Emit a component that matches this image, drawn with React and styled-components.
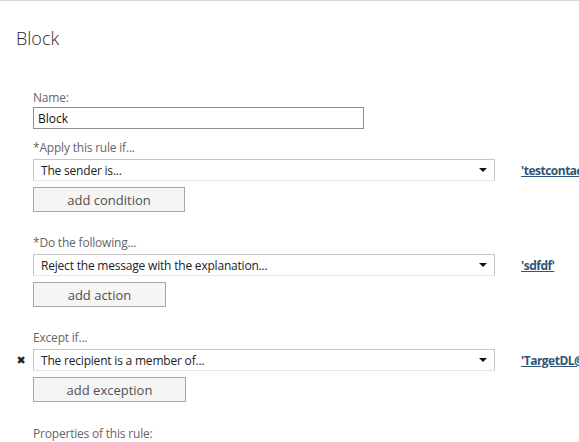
import React from 'react';
import styled, { createGlobalStyle } from 'styled-components';

const GlobalStyle = createGlobalStyle`
  html, body {
    margin: 0;
    padding: 0;
    background: #ffffff;
    overflow: hidden;
  }

  body {
    font-family: 'Open Sans', 'Noto Sans', 'Liberation Sans', sans-serif;
    color: #333333;
  }
`;

const SECTIONS = [
  {
    label: '*Apply this rule if...',
    value: 'The sender is...',
    link: "'testcontact@contoso.com'",
    button: 'add condition',
    buttonWidth: 152,
  },
  {
    label: '*Do the following...',
    value: 'Reject the message with the explanation...',
    link: "'sdfdf'",
    button: 'add action',
    buttonWidth: 133,
  },
  {
    label: 'Except if...',
    value: 'The recipient is a member of...',
    link: "'TargetDL@contoso.com'",
    button: 'add exception',
    buttonWidth: 153,
    removable: true,
  },
];

function App() {
  return (
    <>
      <GlobalStyle />
      <Page>
        <Title>Block</Title>
        <Form>
          <NameField>
            <Label>Name:</Label>
            <TextInput defaultValue="Block" />
          </NameField>
          {SECTIONS.map(section => (
            <Section key={section.label}>
              <Gutter />
              <Label>{section.label}</Label>
              <Spacer />
              <Gutter>{section.removable && <Remove>✖</Remove>}</Gutter>
              <Select>
                <SelectText>{section.value}</SelectText>
                <Arrow />
              </Select>
              <ValueLink href="#">{section.link}</ValueLink>
              <Gutter />
              <AddButton $width={section.buttonWidth}>{section.button}</AddButton>
              <Spacer />
            </Section>
          ))}
          <Footer>
            <Label>Properties of this rule:</Label>
          </Footer>
        </Form>
      </Page>
    </>
  );
}

export default App;

const Page = styled.div`
  width: 579px;
  height: 442px;
  border-top: 1px solid #d6d6d6;
  box-sizing: border-box;
`;

const Title = styled.h1`
  margin: 25px 0 0 16px;
  font-size: 18px;
  font-weight: 300;
  line-height: 24px;
  color: #2b2b33;
`;

const Form = styled.div`
  display: flex;
  flex-direction: column;
  padding-top: 40px;
`;

const NameField = styled.div`
  display: flex;
  flex-direction: column;
  align-items: flex-start;
  gap: 1px;
  padding-left: 33px;
  margin-bottom: 11px;
`;

const Label = styled.span`
  font-size: 12px;
  line-height: 16px;
  color: #666666;
  letter-spacing: -0.2px;
`;

const TextInput = styled.input`
  width: 331px;
  height: 22px;
  box-sizing: border-box;
  margin: 0;
  padding: 0 4px;
  border: 1px solid #8f8f8f;
  font-family: inherit;
  font-size: 12px;
  color: #111111;
  outline: none;
`;

const Section = styled.div`
  display: grid;
  grid-template-columns: 33px 462px 1fr;
  grid-template-rows: 16px 25px 31px;
  align-items: center;
  margin-bottom: 23px;

  & > :nth-child(n + 4) {
    margin-top: 3px;
  }

  & > :nth-child(n + 7) {
    margin-top: 6px;
  }
`;

const Gutter = styled.div`
  display: flex;
  justify-content: center;
  padding-left: 9px;
`;

const Spacer = styled.div``;

const Remove = styled.span`
  font-family: 'DejaVu Sans', sans-serif;
  font-size: 11px;
  line-height: 1;
  color: #222222;
`;

const Select = styled.div`
  display: flex;
  align-items: center;
  justify-content: space-between;
  height: 22px;
  box-sizing: border-box;
  padding: 0 7px;
  border: 1px solid #c6c6c6;
  border-bottom-color: #e2e5ea;
  background: #ffffff;
`;

const SelectText = styled.span`
  font-size: 12px;
  color: #222222;
  letter-spacing: -0.2px;
`;

const Arrow = styled.span`
  width: 0;
  height: 0;
  border-left: 4px solid transparent;
  border-right: 4px solid transparent;
  border-top: 4px solid #111111;
`;

const ValueLink = styled.a`
  margin-left: 26px;
  font-size: 12px;
  font-weight: 700;
  color: #2f5676;
  text-decoration: underline;
  white-space: nowrap;
  letter-spacing: -0.5px;
`;

const AddButton = styled.button`
  width: ${({ $width }) => $width}px;
  height: 25px;
  box-sizing: border-box;
  padding: 0;
  border: 1px solid #a3a8a8;
  background: #f5f5f5;
  font-family: inherit;
  font-size: 13px;
  color: #505050;
  cursor: pointer;
`;

const Footer = styled.div`
  margin-top: -4px;
  padding-left: 33px;
`;
